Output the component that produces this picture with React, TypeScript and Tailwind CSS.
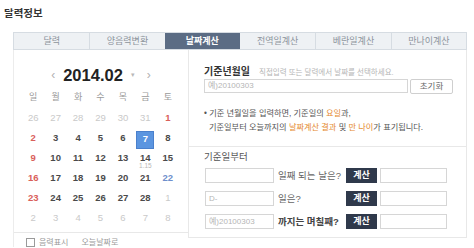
import type { ReactNode } from "react";

// 달력정보 > 날짜계산 tab: small calendar on the left, date calculator on the right.
const TABS = ["달력", "양음력변환", "날짜계산", "전역일계산", "베란일계산", "만나이계산"];
const WEEK = ["일", "월", "화", "수", "목", "금", "토"];

type Cell = { d: number; tone: "dim" | "sun" | "sat" | "holi" | "day" };

const ROWS: Cell[][] = [
	[26, 27, 28, 29, 30, 31].map((d) => ({ d, tone: "dim" as const })).concat([{ d: 1, tone: "holi" }]),
	[2, 3, 4, 5, 6, 7, 8].map((d, i) => ({ d, tone: i === 0 ? "sun" : "day" })),
	[9, 10, 11, 12, 13, 14, 15].map((d, i) => ({ d, tone: i === 0 ? "sun" : "day" })),
	[16, 17, 18, 19, 20, 21, 22].map((d, i) => ({ d, tone: i === 0 ? "sun" : i === 6 ? "sat" : "day" })),
	[23, 24, 25, 26, 27, 28].map((d, i) => ({ d, tone: i === 0 ? "sun" : "day" })).concat([{ d: 1, tone: "dim" }]),
	[2, 3, 4, 5, 6, 7, 8].map((d) => ({ d, tone: "dim" as const })),
];

const toneClass: Record<Cell["tone"], string> = {
	dim: "text-[#c9c9c9] font-normal",
	sun: "text-[#d9605a]",
	holi: "text-[#d9605a]",
	sat: "text-[#6f8fcc]",
	day: "text-[#4a4a4a]",
};

function Orange({ children }: { children: ReactNode }) {
	return <span className="text-[#e5892f]">{children}</span>;
}

function CalcRow({ placeholder, label, bold }: { placeholder: string; label: string; bold?: boolean }) {
	return (
		<div className="flex items-center h-[15px]">
			<div className="w-[69px] h-[15px] border border-[#d6d6d6] text-[8px] leading-[13px] pl-[3px] text-[#b5b5b5]">
				{placeholder}
			</div>
			<div className={`w-[72px] pl-[4px] text-[9.5px] leading-none ${bold ? "text-[#444] font-bold" : "text-[#666]"}`}>
				{label}
			</div>
			<div className="w-[31px] h-[15px] bg-[#2f394b] text-white text-[9px] font-bold leading-[15px] text-center">
				계산
			</div>
			<div className="ml-[3px] w-[67px] h-[15px] border border-[#d6d6d6]" />
		</div>
	);
}

export default function App() {
	return (
		<div className="w-[474px] h-[248px] overflow-hidden bg-white font-[family-name:'Liberation_Sans','Noto_Sans_CJK_KR',sans-serif]">
			<div className="pl-[4px] pt-[6px] h-[32px] text-[10.5px] font-bold text-[#333] leading-[14px]">달력정보</div>

			<div className="ml-[13px] w-[454px]">
				{/* tabs */}
				<div className="grid grid-cols-6 h-[18px] border border-[#d6dce2] bg-[#eef1f4]">
					{TABS.map((t, i) => (
						<div
							key={t}
							className={
								i === 2
									? "bg-[#5b6c84] text-white font-bold text-[9px] leading-[16px] text-center"
									: `text-[#8d949c] text-[9px] leading-[16px] text-center ${i > 0 && i !== 3 ? "border-l border-[#d6dce2]" : ""}`
							}
						>
							{t}
						</div>
					))}
				</div>

				<div className="flex">
					{/* calendar */}
					<div className="w-[175px] border-l border-[#ececec]">
						<div className="pt-[13px] h-[37px] flex items-center justify-center gap-[6px] leading-[18px]">
							<span className="text-[#b0b0b0] text-[12px]">‹</span>
							<span className="text-[16.5px] font-bold text-[#222] mx-[2px]">2014.02</span>
							<span className="text-[#b8b8b8] text-[7px]">▾</span>
							<span className="text-[#b0b0b0] text-[12px] ml-[6px]">›</span>
						</div>
						<div className="ml-[8px] w-[157px]">
							<div className="grid grid-cols-7 h-[21px] items-center text-[9px] text-[#9a9a9a] text-center">
								{WEEK.map((w) => (
									<div key={w}>{w}</div>
								))}
							</div>
							{ROWS.map((row, r) => (
								<div key={r} className="grid grid-cols-7 h-[20px] items-center text-center text-[9.5px] font-bold">
									{row.map((c, i) => {
										const selected = r === 1 && i === 5;
										return (
											<div key={i} className="relative flex justify-center">
												{selected ? (
													<div className="w-[18px] h-[18px] mt-[3px] bg-[#5b95e0] border border-[#4a80cc] text-white leading-[14px]">
														{c.d}
													</div>
												) : (
													<span className={toneClass[c.tone]}>{c.d}</span>
												)}
												{r === 2 && i === 5 && (
													<span className="absolute top-[10px] text-[6.5px] font-normal text-[#b8b8b8]">1.15</span>
												)}
											</div>
										);
									})}
								</div>
							))}
						</div>
						<div className="mt-[4px] border-t border-[#e8e8e8] pt-[5px] pl-[12px] flex items-center text-[8px] text-[#9a9a9a] leading-none">
							<span className="w-[9px] h-[9px] border border-[#9a9a9a] mr-[4px]" />
							<span>음력표시</span>
							<span className="ml-[13px]">오늘날짜로</span>
						</div>
					</div>

					{/* calculator */}
					<div className="flex-1 h-[188px] border-l border-r border-b border-[#e8e8e8]">
						<div className="h-[97px] border-b border-[#e8e8e8] pl-[15px] pt-[16px]">
							<div className="flex items-baseline leading-[12px]">
								<span className="text-[10px] font-bold text-[#333]">기준년월일</span>
								<span className="ml-[9px] text-[7.5px] text-[#b5b5b5]">직접입력 또는 달력에서 날짜를 선택하세요.</span>
							</div>
							<div className="flex mt-[0px]">
								<div className="w-[204px] h-[14px] border border-[#d6d6d6] text-[8px] leading-[12px] pl-[3px] text-[#b5b5b5]">
									예)20100303
								</div>
								<div className="ml-[2px] w-[43px] h-[15px] border border-[#cfcfcf] rounded-[2px] text-[8.5px] leading-[13px] text-center text-[#666]">
									초기화
								</div>
							</div>
							<div className="mt-[13px] text-[8.2px] leading-[14px] text-[#555]">
								<div>
									• 기준 년월일을 입력하면, 기준일의 <Orange>요일</Orange>과,
								</div>
								<div className="pl-[5px]">
									기준일부터 오늘까지의 <Orange>날짜계산 결과</Orange> 및 <Orange>만 나이</Orange>가 표기됩니다.
								</div>
							</div>
						</div>
						<div className="pl-[15px] pt-[3px]">
							<div className="text-[9.5px] text-[#555] leading-[14px]">기준일부터</div>
							<div className="mt-[4px] flex flex-col gap-[8px] pl-[1px]">
								<CalcRow placeholder="" label="일째 되는 날은?" />
								<CalcRow placeholder="D-" label="일은?" />
								<CalcRow placeholder="예)20100303" label="까지는 며칠째?" bold />
							</div>
						</div>
					</div>
				</div>
			</div>
		</div>
	);
}
